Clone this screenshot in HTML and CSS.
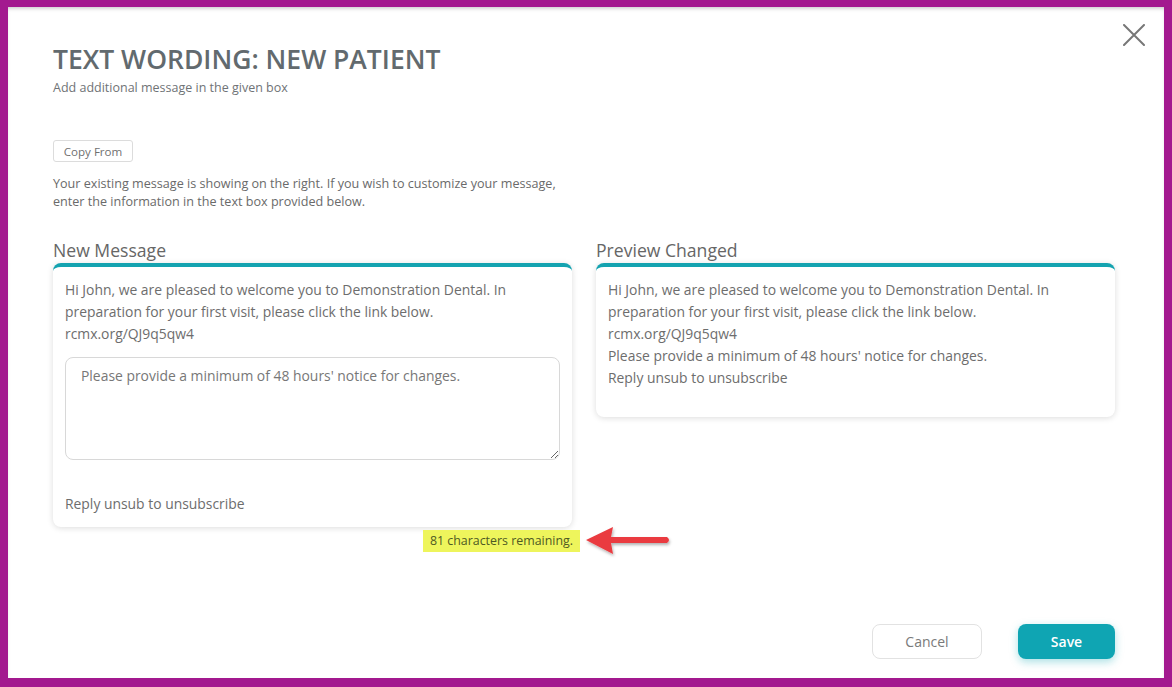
FILE: index.html
```html
<!DOCTYPE html>
<html lang="en">
<head>
<meta charset="utf-8">
<title>Text Wording: New Patient</title>
<link rel="stylesheet" href="styles.css">
</head>
<body>
<div class="frame">
  <div class="modal">
    <button class="close" aria-label="Close">
      <svg width="22" height="22" viewBox="0 0 22 22"><path d="M1 1L21 21M21 1L1 21" stroke="#777" stroke-width="2" fill="none" stroke-linecap="round"/></svg>
    </button>
    <h1 class="title">TEXT WORDING: NEW PATIENT</h1>
    <p class="subtitle">Add additional message in the given box</p>
    <button class="copy-btn">Copy From</button>
    <p class="info">Your existing message is showing on the right. If you wish to customize your message,<br>enter the information in the text box provided below.</p>
    <div class="columns">
      <div class="col">
        <h2 class="label">New Message</h2>
        <div class="card card-edit">
          <div class="msg">Hi John, we are pleased to welcome you to Demonstration Dental. In preparation for your first visit, please click the link below.<br>rcmx.org/QJ9q5qw4</div>
          <textarea class="input" placeholder="Please provide a minimum of 48 hours' notice for changes."></textarea>
          <div class="msg unsub">Reply unsub to unsubscribe</div>
        </div>
        <div class="counter-row">
          <span class="counter">81 characters remaining.
            <svg class="arrow" width="90" height="34" viewBox="0 0 90 34"><defs><filter id="sh" x="-20%" y="-30%" width="140%" height="160%"><feDropShadow dx="1" dy="2" stdDeviation="1.5" flood-color="#000" flood-opacity="0.3"/></filter></defs><path d="M3 16 L30 3 L28 13 L84 13 Q88 16 84 19 L28 19 L30 30 Z" fill="#ea3a3f" filter="url(#sh)"/></svg>
          </span>
        </div>
      </div>
      <div class="col">
        <h2 class="label">Preview Changed</h2>
        <div class="card card-preview">
          <div class="msg">Hi John, we are pleased to welcome you to Demonstration Dental. In<br>preparation for your first visit, please click the link below.<br>rcmx.org/QJ9q5qw4<br>Please provide a minimum of 48 hours' notice for changes.<br>Reply unsub to unsubscribe</div>
        </div>
      </div>
    </div>
    <div class="footer">
      <button class="btn btn-cancel">Cancel</button>
      <button class="btn btn-save">Save</button>
    </div>
  </div>
</div>
</body>
</html>
```

FILE: styles.css
```css
html, body {
  margin: 0;
  padding: 0;
  height: 100%;
}
body {
  background: #a3198f;
  font-family: "Open Sans", "Noto Sans", sans-serif;
  color: #6f6f6f;
}
.frame {
  height: 100%;
  box-sizing: border-box;
  padding: 7px 8px 9px 8px;
}
.modal {
  position: relative;
  height: 100%;
  box-sizing: border-box;
  background: #fff;
  padding: 36px 49px 19px 45px;
  display: flex;
  flex-direction: column;
  box-shadow: inset 0 3px 4px -2px rgba(0,0,0,0.25);
}
.close {
  position: absolute;
  top: 17px;
  right: 19px;
  border: 0;
  background: none;
  padding: 0;
  width: 22px;
  height: 22px;
}
.title {
  margin: 0;
  font-size: 26.5px;
  line-height: 32px;
  font-weight: 600;
  color: #626a6e;
}
.subtitle {
  margin: 4px 0 0;
  font-size: 12.5px;
  line-height: 18px;
  color: #6f7376;
}
.copy-btn {
  align-self: flex-start;
  margin-top: 43px;
  height: 22px;
  width: 80px;
  padding: 0;
  font-family: inherit;
  font-size: 11.6px;
  color: #707070;
  background: #fff;
  border: 1px solid #dcdcdc;
  border-radius: 3px;
}
.info {
  margin: 13px 0 0;
  font-size: 12.6px;
  line-height: 18px;
  color: #6a6a6a;
}
.columns {
  margin-top: 28px;
  display: grid;
  grid-template-columns: 519px 519px;
  column-gap: 24px;
  align-items: start;
}
.label {
  margin: 0 0 2px;
  font-size: 17.6px;
  line-height: 22px;
  font-weight: 400;
  color: #666;
}
.card {
  background: #fff;
  border-top: 4px solid #14a3b0;
  border-radius: 8px;
  box-shadow: 0 1px 6px rgba(0,0,0,0.14);
  padding: 12px;
}
.card-preview {
  padding-bottom: 28px;
}
.msg {
  font-size: 13.9px;
  line-height: 22px;
  color: #6d6d6d;
}
.input {
  display: block;
  box-sizing: border-box;
  width: 100%;
  height: 103px;
  margin-top: 12px;
  padding: 7px 15px;
  border: 1px solid #d8d8d8;
  border-radius: 8px;
  font-family: inherit;
  font-size: 13.9px;
  line-height: 22px;
  color: #6d6d6d;
  resize: vertical;
}
.input::placeholder {
  color: #777;
}
.unsub {
  margin-top: 33px;
}
.counter-row {
  display: flex;
  justify-content: flex-end;
  margin-right: -8px;
  margin-top: 3px;
}
.counter {
  position: relative;
  display: inline-block;
  height: 22px;
  line-height: 22px;
  padding: 0 7px;
  background: #eef55c;
  font-size: 12.4px;
  color: #4e5a24;
}
.arrow {
  position: absolute;
  left: 100%;
  top: -6px;
  margin-left: 3px;
}
.footer {
  margin-top: auto;
  display: flex;
  justify-content: flex-end;
  gap: 36px;
}
.btn {
  height: 35px;
  border-radius: 8px;
  font-family: inherit;
  font-size: 14px;
  padding: 0;
}
.btn-cancel {
  width: 110px;
  background: #fff;
  border: 1px solid #e2e2e2;
  color: #7a7a7a;
}
.btn-save {
  width: 97px;
  background: #0fa5b3;
  border: 0;
  color: #fff;
  font-weight: 600;
  box-shadow: 0 3px 8px rgba(15,165,179,0.35);
}
```
